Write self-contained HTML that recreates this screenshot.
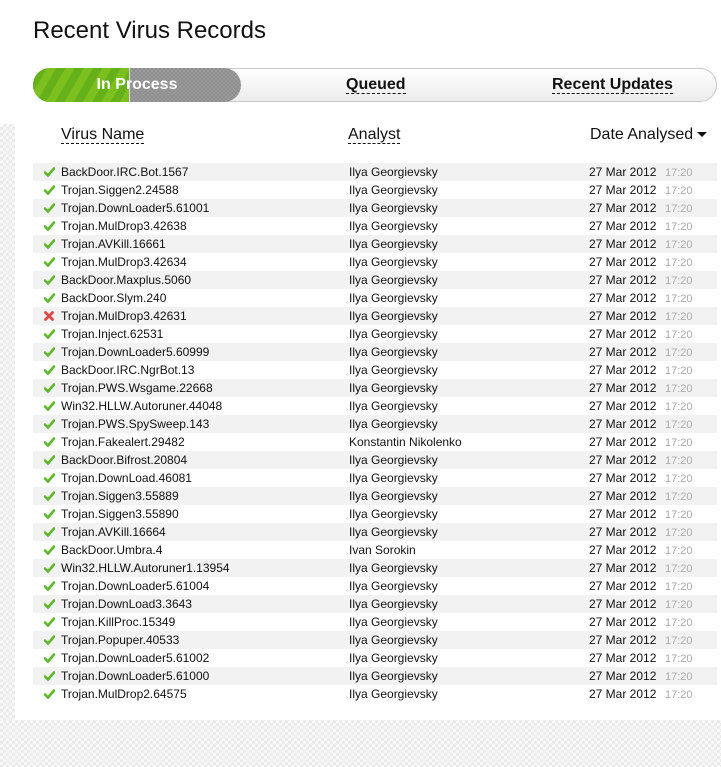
<!DOCTYPE html>
<html><head><meta charset="utf-8"><style>
*{margin:0;padding:0;box-sizing:border-box}
html,body{width:721px;height:767px;overflow:hidden}
body{font-family:"Liberation Sans",Arial,sans-serif;color:#111;position:relative;
background-color:#fff;}
.chk{background-color:#f7f7f7;background-image:linear-gradient(45deg,#ebebeb 25%,transparent 25%,transparent 75%,#ebebeb 75%),linear-gradient(45deg,#ebebeb 25%,transparent 25%,transparent 75%,#ebebeb 75%);background-size:6px 6px;background-position:0 0,3px 3px;position:absolute}
.panel{position:absolute;left:15px;top:0;width:706px;height:720px;background:#fff}
h1{position:absolute;left:33px;top:17px;font-size:24px;font-weight:normal;color:#111}
.tabs{position:absolute;left:33px;top:68px;width:684px;height:34px;border:1px solid #c8c8c8;border-radius:17px;background:linear-gradient(#fff,#ececec)}
.act{position:absolute;left:-1px;top:-1px;width:208px;height:34px;border-radius:17px;overflow:hidden;background:#9a9a9a;background-image:linear-gradient(45deg,#8e8e8e 25%,transparent 25%,transparent 75%,#8e8e8e 75%),linear-gradient(45deg,#8e8e8e 25%,transparent 25%,transparent 75%,#8e8e8e 75%);background-size:4px 4px;background-position:0 0,2px 2px}
.grn{position:absolute;left:0;top:0;width:97px;height:34px;background:repeating-linear-gradient(-60deg,#7cc020 0 8px,#66b01a 8px 16px);border-right:1px solid #ddd}
.act span{position:absolute;left:0;width:208px;top:8px;text-align:center;color:#fff;font-weight:bold;font-size:16px}
.tab{position:absolute;top:7px;font-weight:bold;font-size:16px;border-bottom:1px dashed #111;line-height:17px}
.hd{position:absolute;top:126px;font-size:16px;line-height:18px}
.u{border-bottom:1px dashed #111}
.arr{display:inline-block;width:0;height:0;border-left:5px solid transparent;border-right:5px solid transparent;border-top:5px solid #111;vertical-align:middle;margin-left:4px}
.rows{position:absolute;left:33px;top:163px;width:684px}
.r{height:18px;position:relative;font-size:12px;line-height:18px}
.r:nth-child(odd){background:#f2f2f2}
.r svg{position:absolute;left:11px;top:4px}
.n{position:absolute;left:28px}.a{position:absolute;left:316px}.d{position:absolute;left:556px}.t{position:absolute;left:632px;color:#aaa;font-size:11px;line-height:19px;top:1px}
</style></head><body>
<div class="chk" style="left:0;top:124px;width:15px;height:643px"></div>
<div class="chk" style="left:0;top:720px;width:721px;height:47px"></div>
<div class="panel"></div>
<h1>Recent Virus Records</h1>
<div class="tabs">
<div class="act"><div class="grn"></div><span>In Process</span></div>
<div class="tab" style="left:312px">Queued</div>
<div class="tab" style="left:518px">Recent Updates</div>
</div>
<div class="hd" style="left:61px"><span class="u">Virus Name</span></div>
<div class="hd" style="left:348px"><span class="u">Analyst</span></div>
<div class="hd" style="left:590px">Date Analysed<span class="arr"></span></div>
<div class="rows" id="rows"></div>
<script>
var d=[["BackDoor.IRC.Bot.1567","Ilya Georgievsky"],["Trojan.Siggen2.24588","Ilya Georgievsky"],["Trojan.DownLoader5.61001","Ilya Georgievsky"],["Trojan.MulDrop3.42638","Ilya Georgievsky"],["Trojan.AVKill.16661","Ilya Georgievsky"],["Trojan.MulDrop3.42634","Ilya Georgievsky"],["BackDoor.Maxplus.5060","Ilya Georgievsky"],["BackDoor.Slym.240","Ilya Georgievsky"],["Trojan.MulDrop3.42631","Ilya Georgievsky",1],["Trojan.Inject.62531","Ilya Georgievsky"],["Trojan.DownLoader5.60999","Ilya Georgievsky"],["BackDoor.IRC.NgrBot.13","Ilya Georgievsky"],["Trojan.PWS.Wsgame.22668","Ilya Georgievsky"],["Win32.HLLW.Autoruner.44048","Ilya Georgievsky"],["Trojan.PWS.SpySweep.143","Ilya Georgievsky"],["Trojan.Fakealert.29482","Konstantin Nikolenko"],["BackDoor.Bifrost.20804","Ilya Georgievsky"],["Trojan.DownLoad.46081","Ilya Georgievsky"],["Trojan.Siggen3.55889","Ilya Georgievsky"],["Trojan.Siggen3.55890","Ilya Georgievsky"],["Trojan.AVKill.16664","Ilya Georgievsky"],["BackDoor.Umbra.4","Ivan Sorokin"],["Win32.HLLW.Autoruner1.13954","Ilya Georgievsky"],["Trojan.DownLoader5.61004","Ilya Georgievsky"],["Trojan.DownLoad3.3643","Ilya Georgievsky"],["Trojan.KillProc.15349","Ilya Georgievsky"],["Trojan.Popuper.40533","Ilya Georgievsky"],["Trojan.DownLoader5.61002","Ilya Georgievsky"],["Trojan.DownLoader5.61000","Ilya Georgievsky"],["Trojan.MulDrop2.64575","Ilya Georgievsky"]];
var ok='<svg width="11" height="10" viewBox="0 0 11 10"><path d="M1 5.5L4 8.5L10 1.5" fill="none" stroke="#5cb82a" stroke-width="2.6" stroke-linecap="round"/></svg>';
var bad='<svg width="10" height="10" viewBox="0 0 10 10"><path d="M1.5 1.5L8.5 8.5M8.5 1.5L1.5 8.5" stroke="#e04848" stroke-width="2.8" stroke-linecap="round"/></svg>';
var h='';d.forEach(function(x){h+='<div class="r">'+(x[2]?bad:ok)+'<span class="n">'+x[0]+'</span><span class="a">'+x[1]+'</span><span class="d">27 Mar 2012</span><span class="t">17:20</span></div>'});
document.getElementById('rows').innerHTML=h;
</script>
</body></html>
